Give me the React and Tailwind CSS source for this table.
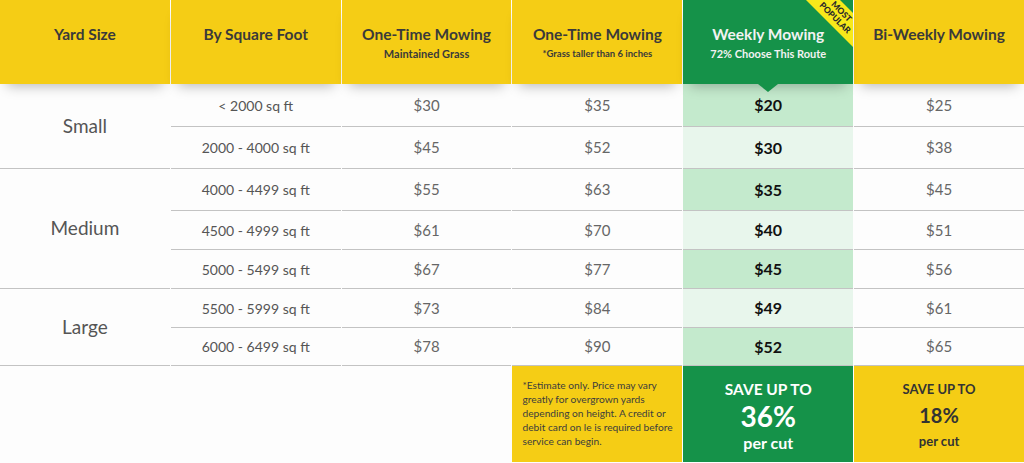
const rows = [
  { sqft: "< 2000 sq ft", a: "$30", b: "$35", w: "$20", bi: "$25" },
  { sqft: "2000 - 4000 sq ft", a: "$45", b: "$52", w: "$30", bi: "$38" },
  { sqft: "4000 - 4499 sq ft", a: "$55", b: "$63", w: "$35", bi: "$45" },
  { sqft: "4500 - 4999 sq ft", a: "$61", b: "$70", w: "$40", bi: "$51" },
  { sqft: "5000 - 5499 sq ft", a: "$67", b: "$77", w: "$45", bi: "$56" },
  { sqft: "5500 - 5999 sq ft", a: "$73", b: "$84", w: "$49", bi: "$61" },
  { sqft: "6000 - 6499 sq ft", a: "$78", b: "$90", w: "$52", bi: "$65" },
];

const groups = [
  { label: "Small", span: "row-span-2" },
  { label: "Medium", span: "row-span-3" },
  { label: "Large", span: "row-span-2" },
];

function HeadCell({ title, sub, subSmall }) {
  return (
    <div className="relative z-10 flex flex-col items-center bg-[#f5cd15] pt-[23px] text-[#3a3a3a] shadow-[0_9px_12px_-7px_rgba(0,0,0,0.28)]">
      <div className="text-[15.5px] font-bold leading-[22px]">{title}</div>
      {sub && (
        <div className={subSmall ? "mt-[2px] text-[9.5px] font-bold leading-[14px]" : "mt-[1px] text-[11px] font-bold leading-[16px]"}>
          {sub}
        </div>
      )}
    </div>
  );
}

export default function App() {
  const cell = "flex items-center justify-center border-b border-[#c3c3c3]";
  return (
    <div className="h-[463px] w-[1024px] overflow-hidden bg-[#fdfdfd] font-['Lato',sans-serif]">
      <div className="grid grid-cols-6 gap-x-px grid-rows-[84px_43px_42px_42px_39px_39px_39px_38px_96px]">
        <HeadCell title="Yard Size" />
        <HeadCell title="By Square Foot" />
        <HeadCell title="One-Time Mowing" sub="Maintained Grass" />
        <HeadCell title="One-Time Mowing" sub="*Grass taller than 6 inches" subSmall />
        <div className="relative z-20 flex flex-col items-center bg-[#159249] pt-[23px] text-[#f2f2f2] shadow-[0_9px_12px_-7px_rgba(0,0,0,0.28)]">
          <div className="text-[15.5px] font-bold leading-[22px]">Weekly Mowing</div>
          <div className="mt-[1px] text-[11px] font-bold leading-[16px]">72% Choose This Route</div>
          <div className="absolute -bottom-[8px] left-1/2 h-0 w-0 -translate-x-1/2 border-x-[10px] border-t-[8px] border-x-transparent border-t-[#159249]" />
          <div className="absolute inset-0 overflow-hidden">
            <div className="absolute left-[108px] top-[3px] flex h-[24px] w-[94px] rotate-45 items-center justify-center bg-[#f7e91a] text-center text-[8.5px] font-black uppercase leading-[9.5px] text-[#2a2a2a]">
              <p>
                Most
                <br />
                Popular
              </p>
            </div>
          </div>
        </div>
        <HeadCell title="Bi-Weekly Mowing" />

        {rows.map((r, i) => {
          const g = i === 0 ? groups[0] : i === 2 ? groups[1] : i === 5 ? groups[2] : null;
          return [
            g && (
              <div key={"g" + i} className={`${g.span} ${cell} col-start-1 text-[19px] text-[#555]`}>
                {g.label}
              </div>
            ),
            <div key={"s" + i} className={`${cell} col-start-2 text-[14px] text-[#555]`}>{r.sqft}</div>,
            <div key={"a" + i} className={`${cell} text-[15px] text-[#666]`}>{r.a}</div>,
            <div key={"b" + i} className={`${cell} text-[15px] text-[#666]`}>{r.b}</div>,
            <div key={"w" + i} className={`${cell} text-[16px] font-bold text-[#111] ${i % 2 === 0 ? "bg-[#c4eacd]" : "bg-[#e8f6ec]"}`}>
              {r.w}
            </div>,
            <div key={"bi" + i} className={`${cell} text-[15px] text-[#666]`}>{r.bi}</div>,
          ];
        })}

        <div className="col-span-3" />
        <div className="bg-[#f5cd15] pl-[10px] pr-[4px] pt-[12px] text-[10.2px] leading-[14px] text-[#3d3d3d]">
          *Estimate only. Price may vary greatly for overgrown yards depending on height. A credit or debit card on le is required before service can begin.
        </div>
        <div className="flex flex-col items-center bg-[#159249] pt-[13px] font-bold text-white">
          <div className="text-[15.5px] leading-[20px]">SAVE UP TO</div>
          <div className="text-[28px] leading-[34px]">36%</div>
          <div className="text-[16px] leading-[20px]">per cut</div>
        </div>
        <div className="flex flex-col items-center bg-[#f5cd15] pt-[14px] font-bold text-[#333]">
          <div className="text-[13px] leading-[18px]">SAVE UP TO</div>
          <div className="mt-[4px] text-[20px] leading-[26px]">18%</div>
          <div className="mt-[4px] text-[13px] leading-[18px]">per cut</div>
        </div>
      </div>
    </div>
  );
}
